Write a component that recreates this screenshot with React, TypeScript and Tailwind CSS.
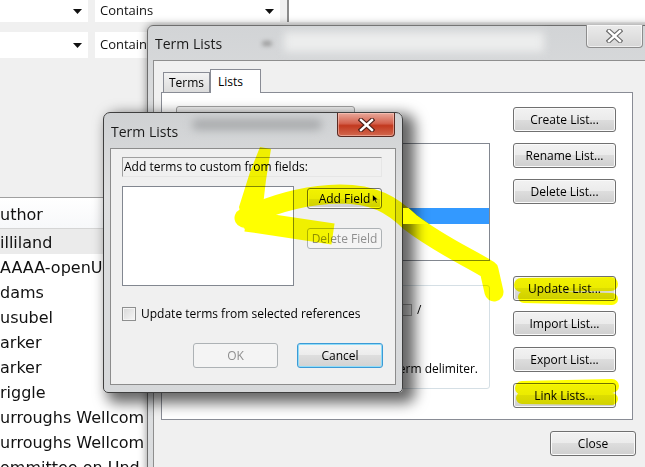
import React from 'react';
import clsx from 'clsx';

const UI_FONT = "font-['Segoe_UI','Open_Sans',sans-serif]";

const AUTHORS = [
  'illiland',
  'AAAA-openU',
  'dams',
  'usubel',
  'arker',
  'arker',
  'riggle',
  'urroughs Wellcom',
  'urroughs Wellcom',
  'ommittee on Und',
];

const ARM_PATH =
  'M244,218 C270,205 300,195 340,194 C375,194 392,205 410,222 C440,245 470,258 489,270 L494,292';

const DownArrow = () => (
  <svg width="9" height="5" viewBox="0 0 9 5" className="shrink-0">
    <polygon points="0,0 9,0 4.5,5" fill="#111" />
  </svg>
);

const Combo = ({ className, text }: { className: string; text?: string }) => (
  <div className={clsx('flex h-full items-center bg-white pl-[5px] pr-[6px] text-[13px] text-[#111]', className)}>
    <span className="flex-1 overflow-hidden whitespace-nowrap">{text}</span>
    <DownArrow />
  </div>
);

interface WinButtonProps {
  children: React.ReactNode;
  className?: string;
  disabled?: boolean;
  focused?: boolean;
}

const WinButton = ({ children, className, disabled, focused }: WinButtonProps) => (
  <div
    className={clsx(
      'relative flex shrink-0 items-center justify-center rounded-[3px] border text-[12px] leading-none',
      disabled && 'border-[#adb2b5] bg-[#f4f4f4] text-[#8f8f8f]',
      focused &&
        'border-[#3c9ad6] bg-[linear-gradient(to_bottom,#f4f4f4_0%,#ececec_50%,#dedede_50%,#d2d2d2_100%)] text-black shadow-[inset_0_0_0_1px_#8fdcf8]',
      !disabled &&
        !focused &&
        'border-[#707070] bg-[linear-gradient(to_bottom,#f2f2f2_0%,#ebebeb_50%,#dddddd_50%,#cfcfcf_100%)] text-black shadow-[inset_0_0_0_1px_#fafafa]',
      className
    )}
  >
    {children}
  </div>
);

// glyph used on caption buttons: white X with dark outline
const CaptionX = ({ outline }: { outline: string }) => (
  <svg width="17" height="14" viewBox="0 0 17 14">
    <path d="M3,2 L14,12 M14,2 L3,12" stroke={outline} strokeWidth="4.6" strokeLinecap="square" />
    <path d="M3,2 L14,12 M14,2 L3,12" stroke="#fff" strokeWidth="2.4" strokeLinecap="square" />
  </svg>
);

const BackgroundApp = () => (
  <div className="flex flex-col">
    {/* filter rows */}
    <div className="flex h-[22px]">
      <Combo className="w-[88px]" />
      <div className="w-[7px]" />
      <Combo className="w-[185px]" text="Contains" />
      <div className="w-[7px]" />
      <div className="w-[2px] bg-[#8a8a8a]" />
      <div className="flex-1 bg-white" />
    </div>
    <div className="mt-[10px] flex h-[26px]">
      <Combo className="w-[88px]" />
      <div className="w-[7px]" />
      <Combo className="w-[185px]" text="Contains" />
    </div>
    <div className="h-[139px]" />

    {/* reference list */}
    <div className="h-px bg-[#a0a0a0]" />
    <div className="flex flex-col bg-white font-['DejaVu_Sans',sans-serif] text-[16px] text-[#111]">
      <div className="flex h-[31px] items-end border-b border-[#d5d5d5] bg-[linear-gradient(to_bottom,#ffffff,#f7f8fa)] pb-[1px]">
        <span>uthor</span>
      </div>
      {AUTHORS.map((name, i) => (
        <div
          key={i}
          className={clsx('flex h-[25px] items-center whitespace-nowrap pt-[2px]', i === 0 && 'bg-[#ebebeb]')}
        >
          {name}
        </div>
      ))}
    </div>
  </div>
);

const OuterDialog = () => (
  <div
    className={clsx(
      'absolute left-[147px] top-[25px] flex h-[450px] w-[506px] flex-col rounded-t-[6px] border border-[#6e6e6e] bg-[linear-gradient(to_bottom,#d2d4d6,#e3e4e5_35%,#dadcde)] px-[5px] shadow-[0_0_8px_rgba(0,0,0,0.45)]',
      UI_FONT
    )}
  >
    {/* caption */}
    <div className="flex h-[34px] items-start">
      <span className="ml-[2px] mt-[7px] text-[14px] text-[#1a1a1a]">Term Lists</span>
      <div className="ml-[40px] mt-[15px] h-[5px] w-[10px] rounded-full bg-[#9a9a9a] blur-[2px]" />
      <div className="ml-[12px] mt-[6px] h-[20px] w-[260px] bg-[#eceded] blur-[4px]" />
      <div className="ml-auto mr-[4px] -mt-px flex h-[23px] w-[57px] items-center justify-center rounded-b-[4px] border border-t-0 border-[#8d8d8d] bg-[linear-gradient(to_bottom,#ebebeb,#d6d6d6)] shadow-[inset_0_0_0_1px_rgba(255,255,255,0.6)]">
        <CaptionX outline="#6a6a6a" />
      </div>
    </div>

    {/* client area */}
    <div className="flex flex-1 flex-col border border-[#8e8e8e] bg-[#f0f0f0] pl-[7px] pt-[8px]">
      {/* tab strip */}
      <div className="flex h-[23px] items-end pl-[2px] text-[12px] text-black">
        <div className="flex h-[20px] w-[47px] items-center border border-b-0 border-[#898c95] bg-[linear-gradient(to_bottom,#f3f3f3,#dcdcdc)] pl-[5px]">
          Terms
        </div>
        <div className="relative z-10 -mb-px flex h-[24px] w-[51px] items-start border border-b-0 border-[#898c95] bg-white pl-[7px] pt-[3px]">
          Lists
        </div>
      </div>

      {/* tab page */}
      <div className="flex h-[328px] w-[472px] border border-[#898c95] bg-white pl-[14px] pt-[13px]">
        <div className="flex w-[314px] flex-col">
          <div className="h-[22px] w-[179px] rounded-[3px] border border-[#a3a3a3] bg-[#f2f2f2]" />
          <div className="mt-[15px] flex h-[118px] flex-col border border-[#828790] bg-white">
            <div className="h-[64px]" />
            <div className="h-[16px] bg-[#3399ff]" />
          </div>
          <div className="mt-[24px] flex h-[104px] flex-col rounded-[3px] border border-[#d5dfe5]">
            <div className="flex items-center pl-[223px] pt-[15px] text-[12px]">
              <div className="h-[12px] w-[12px] border border-[#a8a8a8] bg-[#f4f4f4]" />
              <span className="ml-[5px]">/</span>
            </div>
            <div className="mt-auto whitespace-nowrap pb-[10px] pr-[11px] text-right text-[12px] text-black">
              the term delimiter.
            </div>
          </div>
        </div>

        <div className="ml-[23px] mt-px flex w-[103px] flex-col">
          <WinButton className="h-[25px]">Create List...</WinButton>
          <WinButton className="mt-[11px] h-[25px]">Rename List...</WinButton>
          <WinButton className="mt-[11px] h-[25px]">Delete List...</WinButton>
          <WinButton className="mt-[72px] h-[25px]">Update List...</WinButton>
          <WinButton className="mt-[10px] h-[25px]">Import List...</WinButton>
          <WinButton className="mt-[11px] h-[25px]">Export List...</WinButton>
          <WinButton className="mt-[11px] h-[25px]">Link Lists...</WinButton>
        </div>
      </div>

      <div className="mt-[11px] flex justify-end pr-[10px]">
        <WinButton className="h-[25px] w-[86px]">Close</WinButton>
      </div>
    </div>
  </div>
);

const InnerDialog = () => (
  <div
    className={clsx(
      'absolute left-[103px] top-[112px] flex h-[281px] w-[300px] flex-col rounded-t-[7px] rounded-b-[5px] border border-[#3f3f3f] bg-[linear-gradient(to_bottom,#cfd1d3,#dedfe0_30%,#d6d8da)] px-[6px] pb-[7px] shadow-[8px_6px_14px_4px_rgba(0,0,0,0.6)]',
      UI_FONT
    )}
  >
    {/* caption */}
    <div className="flex h-[35px] items-start">
      <span className="ml-px mt-[8px] text-[14px] text-[#1a1a1a]">Term Lists</span>
      <div className="ml-[14px] mt-[6px] h-[11px] w-[130px] rounded-full bg-[#a9abad] blur-[4px]" />
      <div className="ml-auto mr-px flex h-[24px] w-[58px] items-center justify-center rounded-b-[4px] border border-t-0 border-[#5a2a22] bg-[linear-gradient(to_bottom,#e9a99b_0%,#d4624e_45%,#c2391f_55%,#d2694f_100%)] shadow-[inset_0_0_0_1px_rgba(255,210,200,0.5)]">
        <CaptionX outline="#4a1d16" />
      </div>
    </div>

    {/* client area */}
    <div className="flex flex-1 flex-col border border-[#8c8c8c] bg-[#f0f0f0] pl-[11px] pt-[8px] text-[12px] text-black">
      <div className="flex h-[20px] w-[260px] items-center border border-b-[#e6e6e6] border-l-[#a0a0a0] border-r-[#e6e6e6] border-t-[#a0a0a0] pl-px">
        Add terms to custom from fields:
      </div>

      <div className="mt-[9px] flex">
        <div className="h-[100px] w-[172px] border border-[#828790] bg-white" />
        <div className="ml-[13px] mt-[2px] flex flex-col">
          <WinButton className="h-[21px] w-[75px]">
            Add Field
            <svg width="7" height="10" viewBox="0 0 7 10" className="absolute right-[2px] top-[5px]">
              <path d="M0.5,0.5 L0.5,8 L2.5,6.2 L4,9.3 L5.2,8.7 L3.8,5.8 L6.3,5.8 Z" fill="#000" stroke="#fff" strokeWidth="0.6" />
            </svg>
          </WinButton>
          <WinButton className="mt-[19px] h-[21px] w-[75px]" disabled>
            Delete Field
          </WinButton>
        </div>
      </div>

      <div className="mt-[21px] flex h-[14px] items-center">
        <div className="h-[14px] w-[14px] border border-[#8e8f8f] bg-[linear-gradient(135deg,#d8d8d8,#f6f6f6)] shadow-[inset_0_0_0_1px_#f4f4f4]" />
        <span className="ml-[5px]">Update terms from selected references</span>
      </div>

      <div className="mt-[22px] flex justify-end gap-[19px] pr-[12px]">
        <WinButton className="h-[25px] w-[85px]" disabled>
          OK
        </WinButton>
        <WinButton className="h-[25px] w-[86px]" focused>
          Cancel
        </WinButton>
      </div>
    </div>
  </div>
);

// highlighter marks drawn over the screenshot
const Annotations = () => (
  <>
    <svg
      width="645"
      height="467"
      viewBox="0 0 645 467"
      className="pointer-events-none absolute left-0 top-0 mix-blend-multiply"
    >
      <g fill="none" stroke="#ffff00" strokeLinejoin="round">
        <path d={ARM_PATH} strokeWidth="19" strokeLinecap="round" />
        <path d="M246,221 L333,234" strokeWidth="21" strokeLinecap="butt" />
        <path d="M521,285 L611,284" strokeWidth="14" strokeLinecap="round" />
        <path d="M524,297 L612,299" strokeWidth="12" strokeLinecap="round" />
        <path d="M522,388 L612,386" strokeWidth="14" strokeLinecap="round" />
        <path d="M522,398 L612,399" strokeWidth="12" strokeLinecap="round" />
      </g>
      <polygon points="260,147 271,149 266,180 262,214 244,229 239,207 250,172" fill="#ffff00" />
    </svg>
    {/* over the blue selection the marker reads as plain yellow */}
    <svg width="645" height="467" viewBox="0 0 645 467" className="pointer-events-none absolute left-0 top-0">
      <defs>
        <clipPath id="blue-row">
          <rect x="403" y="208" width="87" height="16" />
        </clipPath>
      </defs>
      <path d={ARM_PATH} fill="none" stroke="#ffff00" strokeWidth="19" clipPath="url(#blue-row)" />
    </svg>
  </>
);

export default function App() {
  return (
    <div className="relative h-[467px] w-[645px] overflow-hidden bg-[#f0f0f0] font-['Open_Sans',sans-serif]">
      <BackgroundApp />
      <OuterDialog />
      <InnerDialog />
      <Annotations />
    </div>
  );
}
